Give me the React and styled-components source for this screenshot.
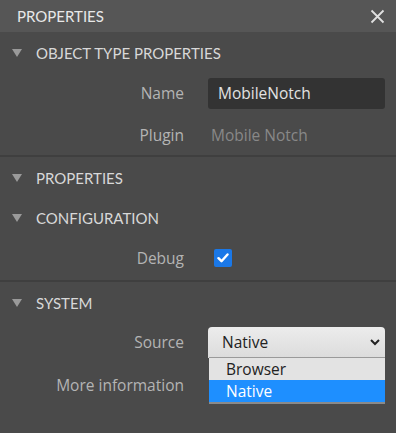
import React from 'react'
import styled, {createGlobalStyle} from 'styled-components'

const Global = createGlobalStyle`
  html, body {
    margin: 0;
    padding: 0;
    background-color: #4a4a4a;
  }
  body {
    font-family: 'Open Sans', 'Noto Sans', sans-serif;
  }
`
const Panel = styled.div`
  width: 396px;
  height: 433px;
  background-color: #4a4a4a;
  overflow: hidden;
`
const TitleBar = styled.div`
  height: 32px;
  display: flex;
  align-items: center;
  justify-content: space-between;
  padding: 0 9px 0 17px;
  background-color: #565656;
  color: #e8e8e8;
  font-family: Lato, 'Open Sans', sans-serif;
  font-size: 15px;
`
const Close = styled.button`
  width: 20px;
  height: 20px;
  display: flex;
  align-items: center;
  justify-content: center;
  padding: 0;
  border: none;
  background: none;
`
const Section = styled.div`
  padding-bottom: ${(props) => props.pad || 0}px;
  border-bottom: ${(props) => props.divider ? '2px solid #3f3f3f' : 'none'};
`
const Header = styled.div`
  height: 40px;
  box-sizing: border-box;
  padding: 2px 0 0 12px;
  display: flex;
  align-items: center;
  gap: 14px;
  color: #d8d8d8;
  font-family: Lato, 'Open Sans', sans-serif;
  font-size: 15px;
`
const Arrow = styled.span`
  width: 0;
  height: 0;
  margin-bottom: 1px;
  border-left: 5px solid transparent;
  border-right: 5px solid transparent;
  border-top: 8px solid #9a9a9a;
`
const Row = styled.div`
  height: ${(props) => props.h || 41}px;
  display: grid;
  grid-template-columns: 184px 1fr;
  align-items: center;
  column-gap: 24px;
  padding-right: 11px;
  position: relative;
`
const Label = styled.span`
  text-align: right;
  color: #b4b4b4;
  font-size: 15.5px;
`
const Input = styled.div`
  height: 31px;
  display: flex;
  align-items: center;
  padding-left: 10px;
  border-radius: 3px;
  background-color: #333333;
  color: #e2e2e2;
  font-size: 15.5px;
`
const Value = styled.span`
  padding-left: 3px;
  color: #888888;
  font-size: 15.5px;
`
const Check = styled.div`
  width: 18px;
  height: 18px;
  margin-left: 6px;
  border-radius: 2px;
  background-color: #1a78e8;
  display: flex;
  align-items: center;
  justify-content: center;
`
const Select = styled.div`
  height: 31px;
  display: flex;
  align-items: center;
  justify-content: space-between;
  padding: 0 4px 0 14px;
  border-radius: 4px 4px 0 0;
  background: linear-gradient(#ececec, #dcdcdc);
  color: #222222;
  font-size: 15.5px;
`
const List = styled.div`
  position: absolute;
  left: 209px;
  top: 35px;
  width: 176px;
  background-color: #e3e3e3;
  border-bottom: 2px solid #8a8a8a;
  border-top: 1px solid #9a9a9a;
  z-index: 2;
`
const Option = styled.div`
  height: 22px;
  display: flex;
  align-items: center;
  padding-left: 17px;
  background-color: ${(props) => props.active ? '#1e8fff' : 'transparent'};
  color: ${(props) => props.active ? '#ffffff' : '#222222'};
  font-size: 15.5px;
`

export default function App() {
  return (
    <Panel>
      <Global/>
      <TitleBar>
        <span>PROPERTIES</span>
        <Close>
          <svg width="15" height="15" viewBox="0 0 15 15">
            <path d="M1.5 1.5L13.5 13.5M13.5 1.5L1.5 13.5" stroke="#e0e0e0" strokeWidth="1.8"/>
          </svg>
        </Close>
      </TitleBar>
      <Section divider>
        <Header><Arrow/>OBJECT TYPE PROPERTIES</Header>
        <Row h={42}>
          <Label>Name</Label>
          <Input>MobileNotch</Input>
        </Row>
        <Row h={41}>
          <Label>Plugin</Label>
          <Value>Mobile Notch</Value>
        </Row>
      </Section>
      <Section>
        <Header><Arrow/>PROPERTIES</Header>
      </Section>
      <Section divider pad={1}>
        <Header><Arrow/>CONFIGURATION</Header>
        <Row h={42}>
          <Label>Debug</Label>
          <Check>
            <svg width="12" height="10" viewBox="0 0 12 10">
              <path d="M1.5 5.2L4.5 8.2L10.5 1.5" stroke="#ffffff" strokeWidth="2.4" fill="none" strokeLinecap="round" strokeLinejoin="round"/>
            </svg>
          </Check>
        </Row>
      </Section>
      <Section>
        <Header><Arrow/>SYSTEM</Header>
        <Row h={40}>
          <Label>Source</Label>
          <Select>
            <span>Native</span>
            <svg width="12" height="8" viewBox="0 0 12 8">
              <path d="M2 2L6 6L10 2" stroke="#222" strokeWidth="2" fill="none"/>
            </svg>
          </Select>
          <List>
            <Option>Browser</Option>
            <Option active>Native</Option>
          </List>
        </Row>
        <Row h={46}>
          <Label>More information</Label>
          <span/>
        </Row>
      </Section>
    </Panel>
  )
}
